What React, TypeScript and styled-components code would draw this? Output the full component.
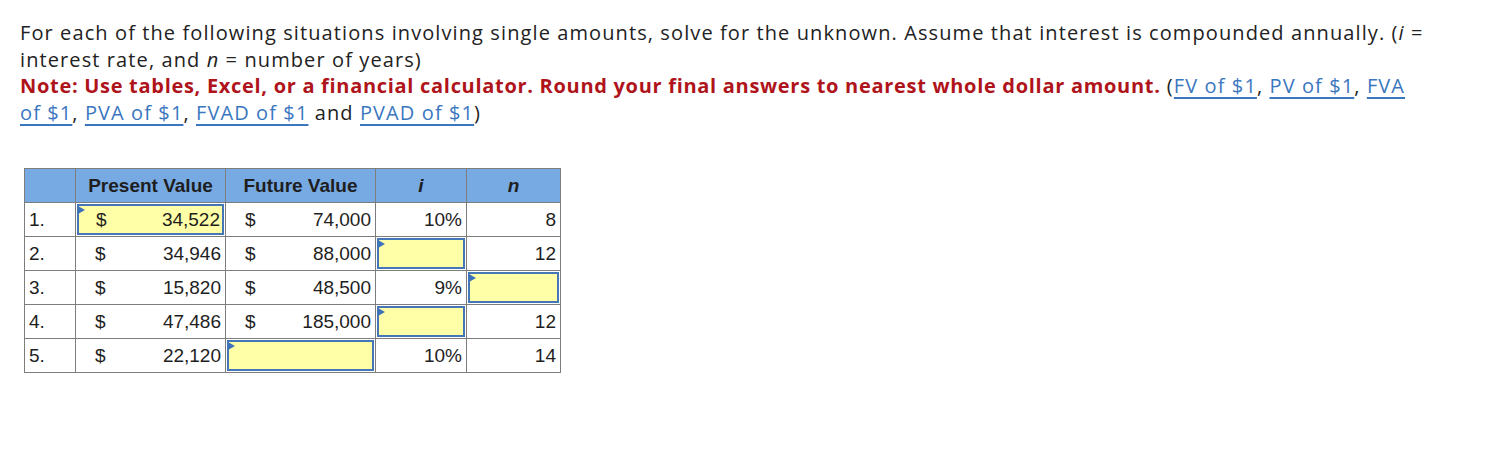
import styled, { createGlobalStyle } from 'styled-components';

const GlobalStyle = createGlobalStyle`
  html, body {
    margin: 0;
    padding: 0;
    background: #ffffff;
  }
`;

const Page = styled.div`
  padding: 20px 0 0 20px;
  font-family: "Open Sans", Lato, sans-serif;
  color: #222222;
`;

const Prompt = styled.p`
  margin: 0;
  font-size: 20px;
  line-height: 26.5px;
  letter-spacing: 1.1px;
  white-space: nowrap;
`;

const Note = styled.span`
  color: #b0141b;
  font-weight: 700;
  letter-spacing: 0.7px;
`;

const RefLink = styled.a`
  color: #3b77bf;
  text-decoration: underline;
  text-decoration-thickness: 2px;
  text-underline-offset: 4px;
  cursor: pointer;
`;

const Var = styled.i`
  font-style: italic;
`;

const Grid = styled.table`
  margin: 42px 0 0 4px;
  border-collapse: collapse;
  table-layout: fixed;
  font-family: "Liberation Sans", Arial, sans-serif;
  font-size: 19px;
  letter-spacing: 0;
  color: #1e1e1e;
`;

const Head = styled.th<{ $italic?: boolean }>`
  height: 33px;
  padding: 0;
  background: #77aae3;
  border: 1px solid #7d7d7d;
  font-weight: 700;
  font-style: ${(p) => (p.$italic ? 'italic' : 'normal')};
  text-align: center;
`;

const Cell = styled.td`
  height: 34px;
  padding: 0;
  border: 1px solid #7d7d7d;
  box-sizing: border-box;
`;

const RowNum = styled.div`
  padding-left: 4px;
`;

const Amount = styled.div`
  display: flex;
  justify-content: space-between;
  align-items: center;
  height: 100%;
  padding: 0 4px 0 19px;
`;

const Plain = styled.div`
  text-align: right;
  padding-right: 4px;
`;

const InputBox = styled.div`
  position: relative;
  box-sizing: border-box;
  height: 31px;
  margin: 1px;
  border: 2px solid #4577b8;
  background: #ffffa8;
  display: flex;
  justify-content: space-between;
  align-items: center;
  padding: 0 2px 0 17px;

  &::before {
    content: '';
    position: absolute;
    left: -1px;
    top: 0;
    border-style: solid;
    border-width: 4px 0 4px 7px;
    border-color: transparent transparent transparent #3d72b8;
  }
`;

type Row = {
  pv: string | null;
  fv: string | null;
  i: string | null;
  n: string | null;
  pvInput?: boolean;
};

const rows: Row[] = [
  { pv: '34,522', fv: '74,000', i: '10%', n: '8', pvInput: true },
  { pv: '34,946', fv: '88,000', i: null, n: '12' },
  { pv: '15,820', fv: '48,500', i: '9%', n: null },
  { pv: '47,486', fv: '185,000', i: null, n: '12' },
  { pv: '22,120', fv: null, i: '10%', n: '14' },
];

function Money({ value }: { value: string }) {
  return (
    <Amount>
      <span>$</span>
      <span>{value}</span>
    </Amount>
  );
}

export default function App() {
  return (
    <Page>
      <GlobalStyle />
      <Prompt>
        For each of the following situations involving single amounts, solve for the unknown. Assume that interest is compounded annually. (<Var>i</Var> =
        <br />
        interest rate, and <Var>n</Var> = number of years)
        <br />
        <Note>Note: Use tables, Excel, or a financial calculator. Round your final answers to nearest whole dollar amount.</Note>{' '}
        (<RefLink>FV of $1</RefLink>, <RefLink>PV of $1</RefLink>, <RefLink>FVA</RefLink>
        <br />
        <RefLink>of $1</RefLink>, <RefLink>PVA of $1</RefLink>, <RefLink>FVAD of $1</RefLink> and <RefLink>PVAD of $1</RefLink>)
      </Prompt>

      <Grid>
        <colgroup>
          <col style={{ width: 51 }} />
          <col style={{ width: 150 }} />
          <col style={{ width: 150 }} />
          <col style={{ width: 91 }} />
          <col style={{ width: 94 }} />
        </colgroup>
        <thead>
          <tr>
            <Head />
            <Head>Present Value</Head>
            <Head>Future Value</Head>
            <Head $italic>i</Head>
            <Head $italic>n</Head>
          </tr>
        </thead>
        <tbody>
          {rows.map((r, idx) => (
            <tr key={idx}>
              <Cell>
                <RowNum>{idx + 1}.</RowNum>
              </Cell>
              <Cell>
                {r.pvInput ? (
                  <InputBox>
                    <span>$</span>
                    <span>{r.pv}</span>
                  </InputBox>
                ) : (
                  <Money value={r.pv ?? ''} />
                )}
              </Cell>
              <Cell>{r.fv ? <Money value={r.fv} /> : <InputBox />}</Cell>
              <Cell>{r.i ? <Plain>{r.i}</Plain> : <InputBox />}</Cell>
              <Cell>{r.n ? <Plain>{r.n}</Plain> : <InputBox />}</Cell>
            </tr>
          ))}
        </tbody>
      </Grid>
    </Page>
  );
}
